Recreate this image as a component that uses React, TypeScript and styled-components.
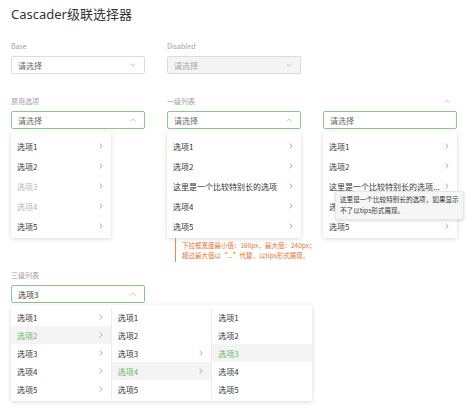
import styled, { createGlobalStyle } from "styled-components";

const GlobalStyle = createGlobalStyle`
  html, body {
    margin: 0;
    padding: 0;
    background: #ffffff;
  }
  body {
    font-family: "Noto Sans CJK SC", "Noto Sans", sans-serif;
    color: #333333;
  }
`;

const ArrowDown = ({ up = false }: { up?: boolean }) => (
  <svg width="6" height="4" viewBox="0 0 6 4">
    <path
      d={up ? "M0.5 3.5 L3 1 L5.5 3.5" : "M0.5 0.5 L3 3 L5.5 0.5"}
      fill="none"
      stroke="#bdbdbd"
      strokeWidth="0.8"
    />
  </svg>
);

const ArrowRight = () => (
  <svg width="4" height="6" viewBox="0 0 4 6">
    <path d="M0.6 0.5 L3.2 3 L0.6 5.5" fill="none" stroke="#9a9a9a" strokeWidth="0.8" />
  </svg>
);

type Item = { text: string; disabled?: boolean; active?: boolean; arrow?: boolean };

const items = (texts: string[]): Item[] => texts.map((t) => ({ text: t, arrow: true }));

const App = () => {
  const disabledList: Item[] = [
    { text: "选项1", arrow: true },
    { text: "选项2", arrow: true },
    { text: "选项3", arrow: true, disabled: true },
    { text: "选项4", arrow: true, disabled: true },
    { text: "选项5", arrow: true },
  ];
  const longList = items(["选项1", "选项2", "这里是一个比较特别长的选项", "选项4", "选项5"]);
  const cutList = items(["选项1", "选项2", "这里是一个比较特别长的选项...", "选项4", "选项5"]);

  const level1: Item[] = [
    { text: "选项1", arrow: true },
    { text: "选项2", arrow: true, active: true },
    { text: "选项3", arrow: true },
    { text: "选项4", arrow: true },
    { text: "选项5", arrow: true },
  ];
  const level2: Item[] = [
    { text: "选项1" },
    { text: "选项2" },
    { text: "选项3", arrow: true },
    { text: "选项4", arrow: true, active: true },
    { text: "选项5" },
  ];
  const level3: Item[] = [
    { text: "选项1" },
    { text: "选项2" },
    { text: "选项3", active: true },
    { text: "选项4" },
    { text: "选项5" },
  ];

  const renderItems = (list: Item[], h: number) =>
    list.map((it, i) => (
      <MenuItem key={i} $h={h} $disabled={it.disabled} $active={it.active}>
        <ItemText>{it.text}</ItemText>
        {it.arrow && <ArrowRight />}
      </MenuItem>
    ));

  return (
    <Page>
      <GlobalStyle />
      <Title>Cascader级联选择器</Title>

      <Section $top={19}>
        <Column>
          <Label>Base</Label>
          <SelectBox>
            <Placeholder>请选择</Placeholder>
            <ArrowDown />
          </SelectBox>
        </Column>
        <Column>
          <Label>Disabled</Label>
          <SelectBox $disabled>
            <Placeholder $disabled>请选择</Placeholder>
            <ArrowDown />
          </SelectBox>
        </Column>
      </Section>

      <Section $top={22}>
        <Column>
          <Label>禁用选项</Label>
          <SelectBox $active>
            <Placeholder>请选择</Placeholder>
            <ArrowDown up />
          </SelectBox>
          <Menu $width={100}>{renderItems(disabledList, 20)}</Menu>
        </Column>
        <Column>
          <Label>一级列表</Label>
          <SelectBox $active>
            <Placeholder>请选择</Placeholder>
            <ArrowDown up />
          </SelectBox>
          <Menu $width={134}>{renderItems(longList, 20)}</Menu>
          <Note>
            <div>下拉框宽度最小值：160px，最大值：240px；</div>
            <div>超过最大值以“...”代替，以tips形式展现。</div>
          </Note>
        </Column>
        <Column>
          <Label $right>
            <ArrowDown up />
          </Label>
          <SelectBox $active>
            <Placeholder>请选择</Placeholder>
          </SelectBox>
          <MenuWrap>
            <Menu $width={134}>{renderItems(cutList, 20)}</Menu>
            <Tooltip>
              <div>这里是一个比较特别长的选项，如果显示</div>
              <div>不了以tips形式展现。</div>
            </Tooltip>
          </MenuWrap>
        </Column>
      </Section>

      <Section $top={8}>
        <Column>
          <Label>三级列表</Label>
          <SelectBox $active>
            <Value>选项3</Value>
            <ArrowDown up />
          </SelectBox>
          <Cascade>
            <CascadeColumn>{renderItems(level1, 18)}</CascadeColumn>
            <CascadeColumn>{renderItems(level2, 18)}</CascadeColumn>
            <CascadeColumn>{renderItems(level3, 18)}</CascadeColumn>
          </Cascade>
        </Column>
      </Section>
    </Page>
  );
};

export default App;

const Page = styled.div`
  width: 474px;
  height: 414px;
  box-sizing: border-box;
  padding: 6px 11px 0;
  overflow: hidden;
`;

const Title = styled.div`
  font-size: 13px;
  line-height: 16px;
  color: #333333;
  font-family: "Noto Sans", "Noto Sans CJK SC", sans-serif;
`;

const Section = styled.div<{ $top: number }>`
  display: flex;
  gap: 22px;
  margin-top: ${(p) => p.$top}px;
`;

const Column = styled.div`
  width: 134px;
  display: flex;
  flex-direction: column;
  position: relative;
`;

const Label = styled.div<{ $right?: boolean }>`
  height: 10px;
  font-size: 7px;
  line-height: 10px;
  color: #a0a0a0;
  margin-bottom: 5px;
  display: flex;
  align-items: center;
  justify-content: ${(p) => (p.$right ? "flex-end" : "flex-start")};
  padding-right: ${(p) => (p.$right ? "7px" : "0")};
`;

const SelectBox = styled.div<{ $active?: boolean; $disabled?: boolean }>`
  height: 18px;
  box-sizing: border-box;
  border: 1px solid ${(p) => (p.$active ? "#8cc78a" : "#dcdcdc")};
  border-radius: 2px;
  background: ${(p) => (p.$disabled ? "#f4f4f4" : "#ffffff")};
  display: flex;
  align-items: center;
  justify-content: space-between;
  padding: 0 8px 0 6px;
`;

const Placeholder = styled.span<{ $disabled?: boolean }>`
  font-size: 8px;
  color: ${(p) => (p.$disabled ? "#a8a8a8" : "#6a6a6a")};
`;

const Value = styled.span`
  font-size: 8px;
  color: #333333;
`;

const MenuWrap = styled.div`
  position: relative;
`;

const Menu = styled.div<{ $width: number }>`
  width: ${(p) => p.$width}px;
  margin-top: 2px;
  padding: 5px 0 2px;
  background: #ffffff;
  box-shadow: 0 1px 4px rgba(0, 0, 0, 0.16);
  border-radius: 2px;
`;

const MenuItem = styled.div<{ $h: number; $disabled?: boolean; $active?: boolean }>`
  height: ${(p) => p.$h}px;
  display: flex;
  align-items: center;
  justify-content: space-between;
  padding: 0 8px 0 6px;
  font-size: 8px;
  color: ${(p) => (p.$disabled ? "#b5b5b5" : p.$active ? "#5fb85c" : "#333333")};
  background: ${(p) => (p.$active ? "#f4f4f4" : "transparent")};
`;

const ItemText = styled.span`
  white-space: nowrap;
  overflow: hidden;
`;

const Note = styled.div`
  margin-left: 8px;
  padding: 2px 0 2px 6px;
  border-left: 1px solid #eb8c4a;
  font-size: 6.5px;
  line-height: 10px;
  color: #e8742a;
  white-space: nowrap;
`;

const Tooltip = styled.div`
  position: absolute;
  left: 12px;
  top: 62px;
  width: 129px;
  box-sizing: border-box;
  padding: 2px 4px 3px;
  background: #f6f6f6;
  border: 1px solid #e6e6e6;
  box-shadow: 0 1px 3px rgba(0, 0, 0, 0.14);
  border-radius: 2px;
  font-size: 6.6px;
  line-height: 11px;
  color: #333333;
  white-space: nowrap;
`;

const Cascade = styled.div`
  display: flex;
  width: 301px;
  margin-top: 2px;
  padding: 3px 0;
  background: #ffffff;
  box-shadow: 0 1px 4px rgba(0, 0, 0, 0.16);
  border-radius: 2px;
`;

const CascadeColumn = styled.div`
  width: 100px;
  & + & {
    border-left: 1px solid #ececec;
  }
`;
